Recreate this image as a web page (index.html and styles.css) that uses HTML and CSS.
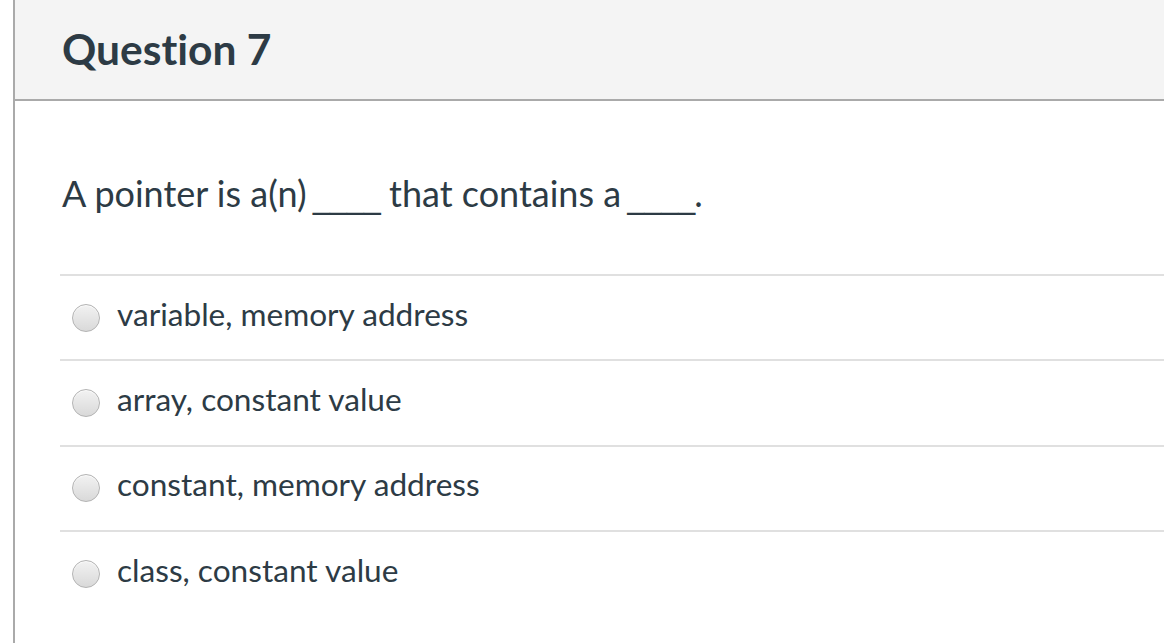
FILE: index.html
```html
<!DOCTYPE html>
<html>
<head>
<meta charset="utf-8">
<link rel="stylesheet" href="styles.css">
</head>
<body>
<div class="question">
  <div class="header"><h2 class="title">Question 7</h2></div>
  <div class="content">
    <p class="prompt">A pointer is a(n) <span class="blank">____</span> that contains a <span class="blank">____</span>.</p>
    <div class="answers">
      <label class="answer"><span class="radio"></span><span class="label">variable, memory address</span></label>
      <label class="answer"><span class="radio"></span><span class="label">array, constant value</span></label>
      <label class="answer"><span class="radio"></span><span class="label">constant, memory address</span></label>
      <label class="answer"><span class="radio"></span><span class="label">class, constant value</span></label>
    </div>
  </div>
</div>
</body>
</html>
```
FILE: styles.css
```css
html, body {
  margin: 0;
  padding: 0;
  background: #fff;
  height: 100%;
  overflow: hidden;
}
body {
  font-family: Lato, "Liberation Sans", sans-serif;
  color: #2d3b45;
  font-variant-ligatures: none;
}
.question {
  margin-left: 13px;
  border-left: 2px solid #aaaaaa;
  min-height: 643px;
}
.header {
  background: #f4f4f4;
  height: 99px;
  border-bottom: 2px solid #aaaaaa;
  display: flex;
  align-items: center;
  padding-left: 47px;
  box-sizing: content-box;
}
.title {
  margin: 0;
  font-size: 42.5px;
  font-weight: 700;
  line-height: 1;
  position: relative;
  top: 0;
}
.content {
  padding-left: 45px;
}
.prompt {
  margin: 0;
  padding: 70px 0 0 2px;
  height: 103px;
  font-size: 36px;
  line-height: 44px;
  box-sizing: content-box;
}
.blank {
  font-family: "DejaVu Sans", sans-serif;
  font-size: 34px;
  margin-left: -3px;
  margin-right: -1px;
}
.answers {
  border-top: 2px solid #e0e0e0;
}
.answer {
  display: flex;
  align-items: center;
  height: 83.3px;
  border-bottom: 2px solid #e0e0e0;
  padding-left: 12px;
}
.answer:last-child {
  border-bottom: none;
}
.radio {
  width: 26px;
  height: 26px;
  border-radius: 50%;
  border: 1px solid #b3b3b3;
  background: linear-gradient(#f2f2f2, #d9d9d9);
  box-shadow: inset 0 1px 1px rgba(255,255,255,0.8);
  flex: none;
}
.label {
  margin-left: 17px;
  font-size: 31.6px;
  line-height: 36px;
  position: relative;
  top: -4px;
}
```
